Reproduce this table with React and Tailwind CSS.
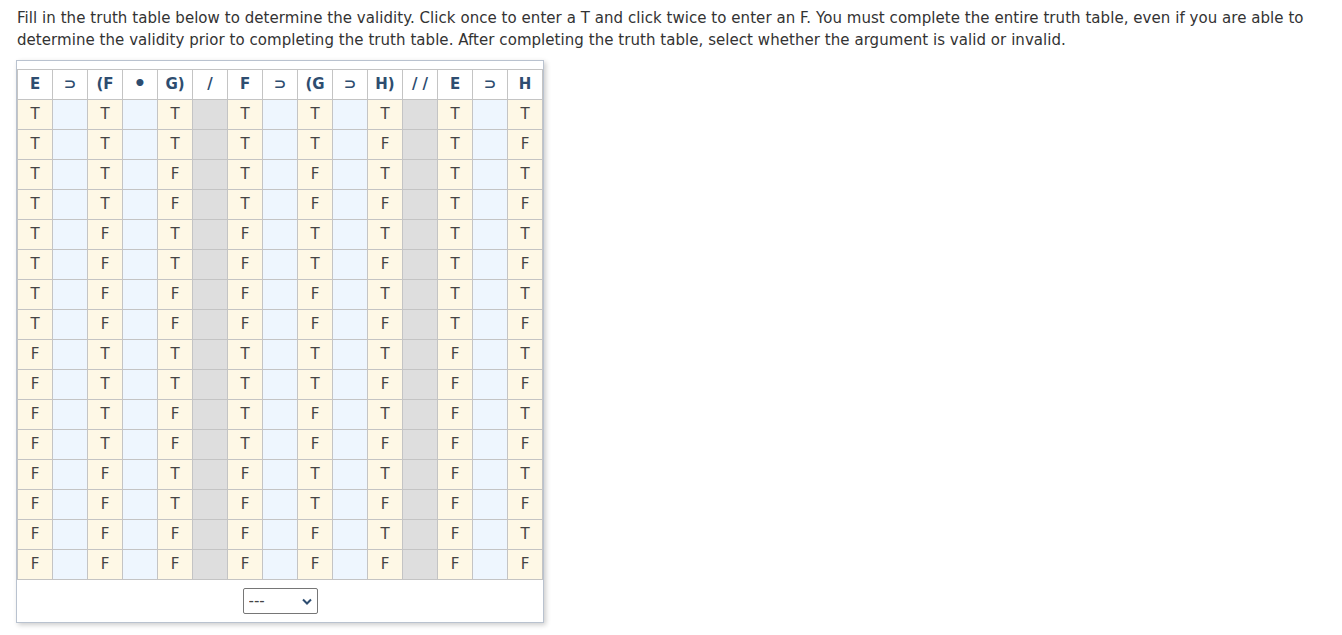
import React, { useState } from "react";

// columns: v = variable column (index into row values), op = operator column, sep = divider
const columns = [
    { label: "E", kind: "v", idx: 0 },
    { label: "⊃", kind: "op" },
    { label: "(F", kind: "v", idx: 1 },
    { label: "•", kind: "op" },
    { label: "G)", kind: "v", idx: 2 },
    { label: "/", kind: "sep" },
    { label: "F", kind: "v", idx: 1 },
    { label: "⊃", kind: "op" },
    { label: "(G", kind: "v", idx: 2 },
    { label: "⊃", kind: "op" },
    { label: "H)", kind: "v", idx: 3 },
    { label: "/ /", kind: "sep" },
    { label: "E", kind: "v", idx: 0 },
    { label: "⊃", kind: "op" },
    { label: "H", kind: "v", idx: 3 },
];

// 16 rows, E F G H in standard order
const rows = Array.from({ length: 16 }, (_, r) =>
    [8, 4, 2, 1].map((b) => ((r & b) === 0 ? "T" : "F"))
);

const cellBase = "w-[35px] h-[30px] border border-[#c4c4c4] text-center p-0";

const App = () => {
    const [answer, setAnswer] = useState("");

    return (
        <div className="min-h-screen bg-white text-[#333] font-['DejaVu_Sans',Verdana,sans-serif]">
            <p className="px-[17px] pt-[7px] text-[15px] leading-[22px] tracking-[0.05px]">
                Fill in the truth table below to determine the validity. Click once to enter a T and click twice to enter an F. You must complete the entire truth table, even if you are able to determine the validity prior to completing the truth table. After completing the truth table, select whether the argument is valid or invalid.
            </p>
            <div className="ml-[16px] mt-[9px] w-[528px] border border-[#b9c2cf] bg-white pt-[8px] shadow-[2px_2px_5px_rgba(0,0,0,0.2)]">
                <table className="border-collapse text-[15px] w-[526px] table-fixed">
                    <thead>
                        <tr>
                            {columns.map((c, i) => (
                                <th
                                    key={i}
                                    className={`${cellBase} bg-white font-bold text-[#2e4d70] whitespace-nowrap`}
                                >
                                    {c.label === "•" ? <span className="text-[20px] leading-none">•</span> : c.label}
                                </th>
                            ))}
                        </tr>
                    </thead>
                    <tbody>
                        {rows.map((row, r) => (
                            <tr key={r}>
                                {columns.map((c, i) => {
                                    if (c.kind === "v") {
                                        return (
                                            <td key={i} className={`${cellBase} bg-[#fef8e6] text-[#444]`}>
                                                {row[c.idx]}
                                            </td>
                                        );
                                    }
                                    if (c.kind === "sep") {
                                        return <td key={i} className={`${cellBase} bg-[#dedede]`} />;
                                    }
                                    return <td key={i} className={`${cellBase} bg-[#eef6fe]`} />;
                                })}
                            </tr>
                        ))}
                    </tbody>
                </table>
                <div className="flex justify-center py-[8px]">
                    <div className="relative w-[75px] h-[26px]">
                        <select
                            value={answer}
                            onChange={(e) => setAnswer(e.target.value)}
                            className="appearance-none w-full h-full border border-[#767676] rounded-[2px] bg-white pl-[5px] text-[15px] text-[#444] font-['DejaVu_Sans',Verdana,sans-serif]"
                        >
                            <option value="">---</option>
                            <option value="valid">valid</option>
                            <option value="invalid">invalid</option>
                        </select>
                        <svg
                            className="absolute right-[6px] top-[10px] pointer-events-none"
                            width="10"
                            height="7"
                            viewBox="0 0 10 7"
                        >
                            <path d="M1 1.5 L5 5.5 L9 1.5" fill="none" stroke="#2e4d70" strokeWidth="2" />
                        </svg>
                    </div>
                </div>
            </div>
        </div>
    );
};

export default App;
